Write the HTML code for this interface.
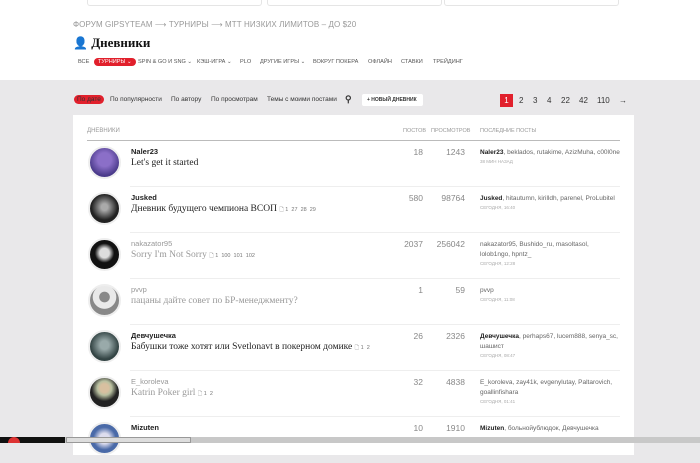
<!DOCTYPE html>
<html><head><meta charset="utf-8"><style>
*{margin:0;padding:0;box-sizing:border-box}
body{width:700px;height:443px;overflow:hidden;background:#e9e8ea;font-family:"Liberation Sans",sans-serif;position:relative;color:#222}
.abs{position:absolute}
.top{left:0;top:0;width:700px;height:80px;background:#fff}
.tc{top:-2px;height:8px;border:1px solid #e5e5e5;border-top:none;border-radius:0 0 3px 3px;background:#fff}
.crumb{left:73px;top:20px;font-size:8px;color:#999;letter-spacing:.1px}
.h1{left:73px;top:35px;font-family:"Liberation Serif",serif;font-weight:bold;font-size:13px;color:#111}
.nav{top:59px;font-size:5.6px;color:#555;text-transform:uppercase;white-space:nowrap}
.pill{background:#e1202c;color:#fff;border-radius:6px;padding:1px 4px}
.sort{top:96px;font-size:6.5px;color:#333;white-space:nowrap}
.card{left:73px;top:115px;width:561px;height:340px;background:#fff}
.hd{top:128px;font-size:5.5px;color:#999;text-transform:uppercase}
.row{left:73px;width:561px;height:46px}
.av{left:15px;top:5px;width:33px;height:33px;border-radius:50%;border:2px solid #eee}
.nm{left:58px;top:6px;font-size:7.5px;font-weight:bold;color:#222}
.tt{left:58px;top:17px;font-family:"Liberation Serif","Noto Serif CJK SC",serif;font-size:9.5px;color:#222;white-space:nowrap}
.tt small{font-family:"Liberation Sans",sans-serif;font-size:5.5px;color:#777}
.num{top:6px;font-size:8.5px;color:#888;text-align:right}
.lp{left:407px;top:7px;width:140px;font-size:6.5px;color:#666;line-height:10px}
.lp b{color:#222}
.tm{font-size:4.5px;color:#aaa;line-height:7px;display:block;text-transform:uppercase}
.sep{left:57px;top:45px;width:490px;height:1px;background:#eee}
.g{color:#999!important}
.pg{top:96px;font-size:8px;color:#333}
</style></head><body>
<div class="abs top"></div>
<div class="abs tc" style="left:87px;width:175px"></div>
<div class="abs tc" style="left:267px;width:175px"></div>
<div class="abs tc" style="left:444px;width:175px"></div>
<div class="abs crumb">ФОРУМ GIPSYTEAM ⟶ ТУРНИРЫ ⟶ МТТ НИЗКИХ ЛИМИТОВ – ДО $20</div>
<div class="abs h1"><span style="font-size:12px">👤</span> Дневники</div>
<div class="abs nav" style="left:78px">все</div>
<div class="abs nav pill" style="left:94px;top:58px">турниры ⌄</div>
<div class="abs nav" style="left:138px">spin &amp; go и sng ⌄</div>
<div class="abs nav" style="left:197px">кэш-игра ⌄</div>
<div class="abs nav" style="left:240px">plo</div>
<div class="abs nav" style="left:260px">другие игры ⌄</div>
<div class="abs nav" style="left:313px">вокруг покера</div>
<div class="abs nav" style="left:368px">офлайн</div>
<div class="abs nav" style="left:401px">ставки</div>
<div class="abs nav" style="left:433px">трейдинг</div>

<div class="abs sort pill" style="left:74px;top:95px;border-radius:5px;padding:1px 3px">По дате</div>
<div class="abs sort" style="left:110px">По популярности</div>
<div class="abs sort" style="left:171px">По автору</div>
<div class="abs sort" style="left:211px">По просмотрам</div>
<div class="abs sort" style="left:267px">Темы с моими постами</div>
<div class="abs sort" style="left:345px;top:94px;font-size:9px;font-weight:bold">⚲</div>
<div class="abs" style="left:362px;top:94px;width:61px;height:12px;background:#fff;border-radius:2px;font-size:5px;color:#333;padding:3px 5px;font-weight:bold">+ НОВЫЙ ДНЕВНИК</div>
<div class="abs" style="left:500px;top:94px;width:13px;height:13px;background:#e1202c;color:#fff;font-size:8px;text-align:center;line-height:13px">1</div>
<div class="abs pg" style="left:519px">2</div>
<div class="abs pg" style="left:533px">3</div>
<div class="abs pg" style="left:547px">4</div>
<div class="abs pg" style="left:561px">22</div>
<div class="abs pg" style="left:579px">42</div>
<div class="abs pg" style="left:597px">110</div>
<div class="abs pg" style="left:619px">→</div>

<div class="abs card"></div>
<div class="abs hd" style="left:87px;font-size:6px">Дневники</div>
<div class="abs hd" style="left:403px">постов</div>
<div class="abs hd" style="left:431px">просмотров</div>
<div class="abs hd" style="left:480px">последние посты</div>
<div class="abs" style="left:87px;top:140px;width:533px;height:1px;background:#bbb"></div>

<div class="abs row" style="top:141px">
<div class="abs av" style="background:radial-gradient(circle at 50% 40%,#8b6fc8 30%,#4a3a8a 70%)"></div>
<div class="abs nm">Naler23</div><div class="abs tt">Let's get it started</div>
<div class="abs num" style="left:320px;width:30px">18</div><div class="abs num" style="left:350px;width:42px">1243</div>
<div class="abs lp"><b>Naler23</b>, beklados, rutakime, AzizMuha, c00l0ne<span class="tm">38 мин назад</span></div>
<div class="abs sep"></div></div>

<div class="abs row" style="top:187px">
<div class="abs av" style="background:radial-gradient(circle at 50% 45%,#aaa 15%,#222 60%)"></div>
<div class="abs nm">Jusked</div><div class="abs tt">Дневник будущего чемпиона ВСОП <small>🗋 1 &nbsp;27 &nbsp;28 &nbsp;29</small></div>
<div class="abs num" style="left:320px;width:30px">580</div><div class="abs num" style="left:350px;width:42px">98764</div>
<div class="abs lp"><b>Jusked</b>, hitautumn, kirilldh, parenel, ProLubitel<span class="tm">сегодня, 16:40</span></div>
<div class="abs sep"></div></div>

<div class="abs row" style="top:233px">
<div class="abs av" style="background:radial-gradient(circle at 50% 45%,#ddd 22%,#111 45%)"></div>
<div class="abs nm g" style="font-weight:normal">nakazator95</div><div class="abs tt g">Sorry I'm Not Sorry <small>🗋 1 &nbsp;100 &nbsp;101 &nbsp;102</small></div>
<div class="abs num" style="left:320px;width:30px">2037</div><div class="abs num" style="left:350px;width:42px">256042</div>
<div class="abs lp">nakazator95, Bushido_ru, masoltasol, lolob1ngo, hpntz_<span class="tm">сегодня, 12:28</span></div>
<div class="abs sep"></div></div>

<div class="abs row" style="top:279px">
<div class="abs av" style="background:radial-gradient(circle at 50% 38%,#888 22%,#e9e9e9 24%,#e9e9e9 50%,#888 52%);"></div>
<div class="abs nm g" style="font-weight:normal">pvvp</div><div class="abs tt g">пацаны дайте совет по БР-менеджменту?</div>
<div class="abs num" style="left:320px;width:30px">1</div><div class="abs num" style="left:350px;width:42px">59</div>
<div class="abs lp">pvvp<span class="tm">сегодня, 11:08</span></div>
<div class="abs sep"></div></div>

<div class="abs row" style="top:325px">
<div class="abs av" style="background:radial-gradient(circle at 50% 45%,#9aa 20%,#344 65%)"></div>
<div class="abs nm">Девчушечка</div><div class="abs tt">Бабушки тоже хотят или Svetlonavt в покерном домике <small>🗋 1 &nbsp;2</small></div>
<div class="abs num" style="left:320px;width:30px">26</div><div class="abs num" style="left:350px;width:42px">2326</div>
<div class="abs lp"><b>Девчушечка</b>, perhaps67, lucem888, senya_sc, шашист<span class="tm">сегодня, 08:47</span></div>
<div class="abs sep"></div></div>

<div class="abs row" style="top:371px">
<div class="abs av" style="background:radial-gradient(circle at 50% 35%,#d8c0a0 18%,#b8c0a0 30%,#222 55%)"></div>
<div class="abs nm g" style="font-weight:normal">E_koroleva</div><div class="abs tt g">Katrin Poker girl <small>🗋 1 &nbsp;2</small></div>
<div class="abs num" style="left:320px;width:30px">32</div><div class="abs num" style="left:350px;width:42px">4838</div>
<div class="abs lp">E_koroleva, zay41k, evgenylutay, Paltarovich, goallinfishara<span class="tm">сегодня, 01:41</span></div>
<div class="abs sep"></div></div>

<div class="abs row" style="top:417px">
<div class="abs av" style="background:radial-gradient(circle at 50% 50%,#dde 25%,#4a6aa8 55%)"></div>
<div class="abs nm">Mizuten</div>
<div class="abs num" style="left:320px;width:30px">10</div><div class="abs num" style="left:350px;width:42px">1910</div>
<div class="abs lp"><b>Mizuten</b>, больнойублюдок, Девчушечка</div>
</div>

<div class="abs" style="left:0;top:437px;width:700px;height:6px;background:#c8c8c8"></div>
<div class="abs" style="left:0;top:437px;width:65px;height:6px;background:#111"></div>
<div class="abs" style="left:8px;top:437px;width:12px;height:6px;background:#d33;border-radius:6px 6px 0 0"></div>
<div class="abs" style="left:66px;top:437px;width:125px;height:6px;background:#ddd;border:1px solid #999"></div>
</body></html>
